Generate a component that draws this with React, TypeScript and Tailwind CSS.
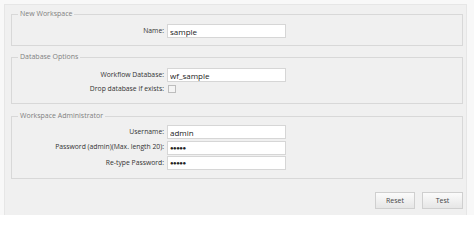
import React from 'react';

const Row = ({ label, children }: { label: string; children: React.ReactNode }) => (
  <div className="flex h-[14px] items-center">
    <label className="w-[154px] shrink-0 pr-[2px] text-right text-[6.8px] leading-none text-[#333]">{label}</label>
    <div className="ml-[1px] flex items-center">{children}</div>
  </div>
);

const TextBox = ({ value, password }: { value: string; password?: boolean }) => (
  <input
    readOnly
    type="text"
    value={password ? '●●●●●' : value}
    className={`box-border h-[14px] w-[119px] border border-[#d6d6d6] bg-white px-[2px] leading-none text-[#222] outline-none ${password ? 'text-[6px] tracking-[-0.5px]' : 'text-[8px]'}`}
  />
);

const Group = ({ title, children, className }: { title: string; children: React.ReactNode; className?: string }) => (
  <fieldset className={`ml-[6px] mr-[3px] border border-[#d8d8d8] px-0 ${className ?? ''}`}>
    <legend className="ml-[6px] px-[2px] text-[7px] leading-[10px] text-[#808080]">{title}</legend>
    {children}
  </fieldset>
);

export default function App() {
  return (
    <div className="h-[215px] w-[474px] bg-[#f8f8f8] pl-[4px] pt-[4px]" style={{ fontFamily: '"Open Sans", "Liberation Sans", sans-serif' }}>
      <div className="h-[211px] w-[463px] border-l border-r border-t border-[#e6e6e6] bg-[#f0f0f0] pt-[4px]">
        <Group title="New Workspace" className="pb-[7px]">
          <div className="mt-[5px] flex flex-col">
            <Row label="Name:">
              <TextBox value="sample" />
            </Row>
          </div>
        </Group>

        <Group title="Database Options" className="mt-[6px] pb-[7px]">
          <div className="mt-[6px] flex flex-col">
            <Row label="Workflow Database:">
              <TextBox value="wf_sample" />
            </Row>
            <Row label="Drop database if exists:">
              <span className="ml-[1px] block h-[8px] w-[8px] border border-[#bdbdbd] bg-[#f4f4f4]" />
            </Row>
          </div>
        </Group>

        <Group title="Workspace Administrator" className="mt-[7px] pb-[8px]">
          <div className="mt-[4px] flex flex-col gap-[1.5px]">
            <Row label="Username:">
              <TextBox value="admin" />
            </Row>
            <Row label="Password (admin)(Max. length 20):">
              <TextBox value="admin" password />
            </Row>
            <Row label="Re-type Password:">
              <TextBox value="admin" password />
            </Row>
          </div>
        </Group>

        <div className="mr-[3px] mt-[13px] flex justify-end gap-[7px]">
          <button className="h-[17px] w-[40px] border border-[#cfcfcf] bg-gradient-to-b from-[#fbfbfb] to-[#e6e6e6] text-[7px] leading-none text-[#444]">
            Reset
          </button>
          <button className="h-[17px] w-[41px] border border-[#cfcfcf] bg-gradient-to-b from-[#fbfbfb] to-[#e6e6e6] text-[7px] leading-none text-[#444]">
            Test
          </button>
        </div>
      </div>
    </div>
  );
}
